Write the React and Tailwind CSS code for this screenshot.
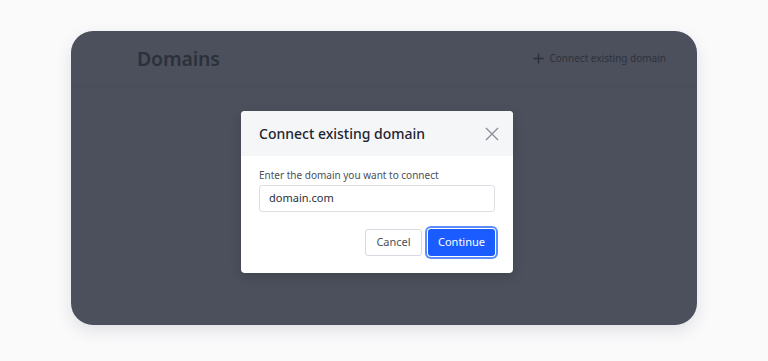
export default function App() {
  return (
    <div className="w-[768px] h-[361px] bg-[#fafafb] pt-[31px] pl-[71px] font-['Noto_Sans',sans-serif]">
      <div className="w-[626px] h-[294px] rounded-[22px] bg-[#4b505c] shadow-[0_6px_16px_rgba(40,50,70,0.12)] overflow-hidden flex flex-col">
        {/* Page header (under overlay) */}
        <div className="h-[56px] border-b border-[#474c58] flex items-center justify-between pl-[66px] pr-[31px]">
          <h1 className="text-[19.5px] font-semibold text-[#2b303b] tracking-[-0.2px]">Domains</h1>
          <div className="flex items-center gap-[5px] text-[10px] text-[#2e323d]">
            <svg width="11" height="11" viewBox="0 0 12 12" fill="none" stroke="#2b2f3a" strokeWidth="1.6">
              <path d="M6 0.5V11.5M0.5 6H11.5" />
            </svg>
            <span>Connect existing domain</span>
          </div>
        </div>

        {/* Modal */}
        <div className="flex-1 flex justify-center pt-[24px] pr-[14px]">
          <div className="w-[272px] h-[162px] bg-white rounded-[4px] overflow-hidden shadow-[0_4px_12px_rgba(0,0,0,0.15)]">
            <div className="h-[45px] bg-[#f5f6f8] flex items-center justify-between pl-[18px] pr-[14px]">
              <span className="text-[14px] font-medium text-[#1f2430]">Connect existing domain</span>
              <svg width="14" height="14" viewBox="0 0 14 14" fill="none" stroke="#8b909a" strokeWidth="1.4">
                <path d="M1 1L13 13M13 1L1 13" />
              </svg>
            </div>
            <div className="px-[18px] pt-[12px]">
              <div className="text-[10px] text-[#4a4f5a] leading-[14px]">Enter the domain you want to connect</div>
              <div className="mt-[3px] h-[27px] border border-[#dcdfe4] rounded-[3px] flex items-center pl-[9px] text-[11px] text-[#2a2f3a]">
                domain.com
              </div>
              <div className="flex justify-end gap-[6px] mt-[17px]">
                <button className="h-[27px] w-[57px] border border-[#d7dae0] rounded-[3px] bg-white text-[11px] text-[#4a4f58]">
                  Cancel
                </button>
                <button className="h-[27px] w-[67px] rounded-[3px] bg-[#1a5cff] text-[11px] text-white ring-2 ring-[#5a8cff] ring-offset-1 ring-offset-white">
                  Continue
                </button>
              </div>
            </div>
          </div>
        </div>
      </div>
    </div>
  )
}
